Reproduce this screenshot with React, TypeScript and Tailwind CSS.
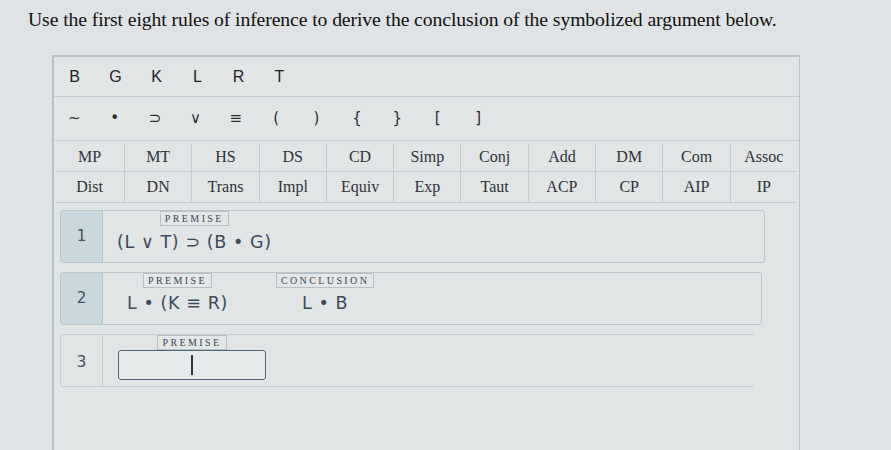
import React from "react";

const letters = ["B", "G", "K", "L", "R", "T"];
const symbols = ["~", "•", "⊃", "∨", "≡", "(", ")", "{", "}", "[", "]"];
const rules1 = ["MP", "MT", "HS", "DS", "CD", "Simp", "Conj", "Add", "DM", "Com", "Assoc"];
const rules2 = ["Dist", "DN", "Trans", "Impl", "Equiv", "Exp", "Taut", "ACP", "CP", "AIP", "IP"];

function Label({ text }: { text: string }) {
  return (
    <div className="h-[15px] px-[4px] flex items-center border border-[#b7c0c4] bg-[#e3e7e8] font-['Liberation_Serif'] text-[10px] tracking-[2.4px] text-[#3d4850] leading-none">
      {text}
    </div>
  );
}

function Formula({ text }: { text: string }) {
  return (
    <div className="font-['DejaVu_Sans'] text-[17.5px] text-[#3c4b5c] leading-none whitespace-pre tracking-[0.6px]">
      {text}
    </div>
  );
}

export default function App() {
  return (
    <div className="w-[891px] h-[450px] bg-[#dfe3e5] overflow-hidden">
      <p className="pl-[28px] pt-[8px] font-['Liberation_Serif'] text-[19.7px] leading-[22px] text-[#111] tracking-[-0.1px]">
        Use the first eight rules of inference to derive the conclusion of the symbolized argument below.
      </p>
      <div className="ml-[52px] mt-[25px] w-[748px] h-[400px] border-l-[2px] border-t-[2px] border-r border-[#b3c3cc] bg-[#e1e5e6]">
        <div className="h-[40px] flex items-center border-b border-[#c3ccd0] font-['Liberation_Sans'] text-[16px] text-[#1f2326]">
          {letters.map((l) => (
            <div key={l} className="w-[41px] text-center">
              {l}
            </div>
          ))}
        </div>
        <div className="h-[44px] flex items-center border-b border-[#c3ccd0] font-['DejaVu_Sans'] text-[15px] text-[#2a2e31]">
          {symbols.map((s, i) => (
            <div key={i} className="w-[40.4px] text-center">
              {s}
            </div>
          ))}
        </div>
        <div className="ml-[1px] mt-[2px] w-[742px] font-['Liberation_Serif'] text-[16px] text-[#2e3336]">
          <div className="grid grid-cols-[69px_repeat(10,67.3px)] h-[29px] border-b border-[#c3ccd0]">
            {rules1.map((r, i) => (
              <div key={r} className={`flex items-center justify-center ${i > 0 ? "border-l border-[#c3ccd0]" : ""}`}>
                {r}
              </div>
            ))}
          </div>
          <div className="grid grid-cols-[69px_repeat(10,67.3px)] h-[31px] border-b border-[#c3ccd0]">
            {rules2.map((r, i) => (
              <div key={r} className={`flex items-center justify-center ${i > 0 ? "border-l border-[#c3ccd0]" : ""}`}>
                {r}
              </div>
            ))}
          </div>
        </div>
        <div className="ml-[6px] mt-[7px] flex flex-col gap-[9px]">
          <div className="w-[705px] h-[53px] flex border border-[#bcc6ca] rounded-[3px]">
            <div className="w-[42px] bg-[#c9d8dc] border-r border-[#bcc6ca] flex items-center justify-center font-['DejaVu_Sans'] text-[15px] text-[#3f5060]">
              1
            </div>
            <div className="pl-[14px] flex flex-col items-center">
              <Label text="PREMISE" />
              <div className="mt-[8px]">
                <Formula text="(L ∨ T) ⊃ (B • G)" />
              </div>
            </div>
          </div>
          <div className="w-[702px] h-[53px] flex border border-[#bcc6ca] rounded-[3px]">
            <div className="w-[42px] bg-[#c9d8dc] border-r border-[#bcc6ca] flex items-center justify-center font-['DejaVu_Sans'] text-[15px] text-[#3f5060]">
              2
            </div>
            <div className="pl-[24px] flex flex-col items-center">
              <Label text="PREMISE" />
              <div className="mt-[7px]">
                <Formula text="L • (K ≡ R)" />
              </div>
            </div>
            <div className="ml-[48px] flex flex-col items-center">
              <Label text="CONCLUSION" />
              <div className="mt-[7px]">
                <Formula text="L • B" />
              </div>
            </div>
          </div>
          <div className="w-[695px] h-[53px] flex border border-[#c6cfd2] border-r-transparent rounded-[3px]">
            <div className="w-[42px] border-r border-[#c6cfd2] flex items-center justify-center font-['DejaVu_Sans'] text-[15px] text-[#3f5060] pt-[4px]">
              3
            </div>
            <div className="pl-[15px] flex flex-col items-center">
              <Label text="PREMISE" />
              <div className="w-[148px] h-[30px] border-[1.5px] border-[#4f6474] rounded-[3px] bg-[#e6eaeb] flex items-center justify-center">
                <div className="w-[1.5px] h-[20px] bg-[#2a3540]" />
              </div>
            </div>
          </div>
        </div>
      </div>
    </div>
  );
}
